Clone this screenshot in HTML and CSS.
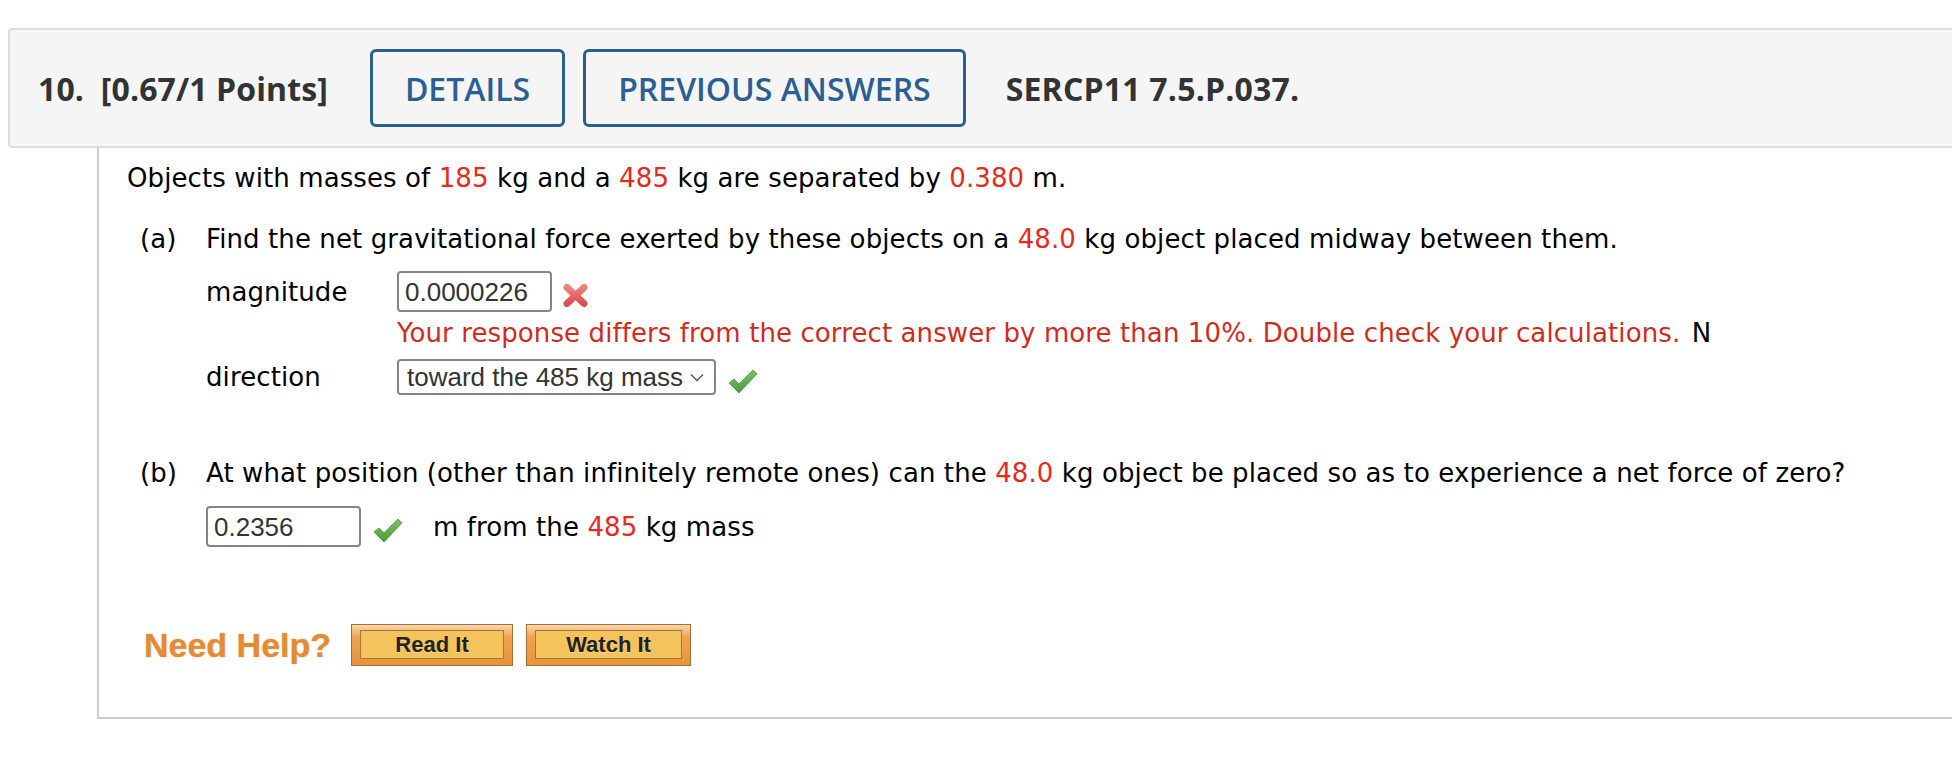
FILE: index.html
```html
<!DOCTYPE html>
<html lang="en">
<head>
<meta charset="utf-8">
<title>Question 10</title>
<link rel="stylesheet" href="styles.css">
</head>
<body>
<div class="page">
  <div class="q-header">
    <span class="q-num">10.&nbsp; [0.67/1 Points]</span>
    <button class="tab-btn tab-first">DETAILS</button>
    <button class="tab-btn">PREVIOUS ANSWERS</button>
    <span class="q-code">SERCP11 7.5.P.037.</span>
  </div>
  <div class="q-body">
    <p class="intro">Objects with masses of <span class="num">185</span> kg and a <span class="num">485</span> kg are separated by <span class="num">0.380</span> m.</p>

    <div class="part part-a">
      <span class="part-label">(a)</span>
      <div class="part-main">
        <p class="prompt">Find the net gravitational force exerted by these objects on a <span class="num">48.0</span> kg object placed midway between them.</p>
        <div class="answers">
          <span class="ans-label">magnitude</span>
          <div class="field">
            <span class="input">0.0000226</span>
            <svg class="icon-x" width="27" height="25" viewBox="0 0 27 25" aria-hidden="true">
              <defs>
                <linearGradient id="xg" x1="0" y1="0" x2="0" y2="1">
                  <stop offset="0" stop-color="#ef8081"/>
                  <stop offset="1" stop-color="#dc4c4f"/>
                </linearGradient>
              </defs>
              <path d="M5 4.5 L22 20.5 M22 4.5 L5 20.5" stroke="url(#xg)" stroke-width="7" stroke-linecap="round" fill="none"/>
            </svg>
          </div>
          <div class="error">Your response differs from the correct answer by more than 10%. Double check your calculations. <span class="unit">N</span></div>
          <span class="ans-label dir">direction</span>
          <div class="field dir">
            <div class="select">
              <span>toward the 485 kg mass</span>
              <svg width="14" height="9" viewBox="0 0 14 9" aria-hidden="true"><polyline points="1,1.5 7,7.5 13,1.5" fill="none" stroke="#555" stroke-width="1.5"/></svg>
            </div>
            <svg class="icon-check" width="31" height="26" viewBox="0 0 31 26" aria-hidden="true">
              <defs>
                <linearGradient id="cg1" x1="0" y1="0" x2="0" y2="1">
                  <stop offset="0" stop-color="#7cc468"/>
                  <stop offset="1" stop-color="#4a9a3b"/>
                </linearGradient>
              </defs>
              <path d="M2 15 L7 11 L12 16 L26 2 L30 6 L12 25 Z" fill="url(#cg1)" stroke="#4f9a40" stroke-width="0.8" stroke-linejoin="round"/>
            </svg>
          </div>
        </div>
      </div>
    </div>

    <div class="part part-b">
      <span class="part-label">(b)</span>
      <div class="part-main">
        <p class="prompt">At what position (other than infinitely remote ones) can the <span class="num">48.0</span> kg object be placed so as to experience a net force of zero?</p>
        <div class="b-row">
          <span class="input">0.2356</span>
          <svg class="icon-check" width="31" height="26" viewBox="0 0 31 26" aria-hidden="true">
            <defs>
              <linearGradient id="cg2" x1="0" y1="0" x2="0" y2="1">
                <stop offset="0" stop-color="#7cc468"/>
                <stop offset="1" stop-color="#4a9a3b"/>
              </linearGradient>
            </defs>
            <path d="M2 15 L7 11 L12 16 L26 2 L30 6 L12 25 Z" fill="url(#cg2)" stroke="#4f9a40" stroke-width="0.8" stroke-linejoin="round"/>
          </svg>
          <span class="b-unit">m from the <span class="num">485</span> kg mass</span>
        </div>
      </div>
    </div>

    <div class="help">
      <span class="need-help">Need Help?</span>
      <span class="help-btn read"><span>Read It</span></span>
      <span class="help-btn watch"><span>Watch It</span></span>
    </div>
  </div>
</div>
</body>
</html>
```

FILE: styles.css
```css
html, body {
  margin: 0;
  padding: 0;
  background: #ffffff;
  overflow: hidden;
}

.page {
  padding: 28px 0 0 8px;
}

/* ---------- header bar ---------- */
.q-header {
  display: flex;
  align-items: center;
  height: 116px;
  margin-right: -40px;
  background: #f5f5f5;
  border: 2px solid #dddddd;
  border-radius: 4px 0 0 4px;
  padding-left: 28px;
  font-family: "Open Sans", "DejaVu Sans", sans-serif;
  font-size: 32px;
  color: #333333;
  white-space: nowrap;
}

.q-num {
  font-weight: 700;
  letter-spacing: 0.1px;
}

.tab-btn {
  box-sizing: border-box;
  height: 78px;
  margin-left: 18px;
  padding: 0 32px;
  border: 3px solid #2b5f94;
  border-radius: 6px;
  background: transparent;
  color: #2b5f94;
  font-family: "Open Sans", "DejaVu Sans", sans-serif;
  font-size: 32px;
  font-weight: 600;
}

.tab-first {
  margin-left: 42px;
}

.q-code {
  margin-left: 40px;
  font-weight: 700;
  letter-spacing: 0.2px;
}

/* ---------- question body ---------- */
.q-body {
  margin-left: 89px;
  margin-right: -40px;
  padding: 15px 0 51px 28px;
  border-left: 2px solid #cccccc;
  border-bottom: 2px solid #cccccc;
  font-family: "DejaVu Sans", Verdana, sans-serif;
  font-size: 26px;
  line-height: 30px;
  letter-spacing: 0.1px;
  color: #000000;
  white-space: nowrap;
}

.intro,
.prompt {
  margin: 0;
}

.num {
  color: #e8291d;
}

.part {
  display: grid;
  grid-template-columns: 66px auto;
  margin-left: 13px;
}

.part-a {
  margin-top: 31px;
}

.part-b {
  margin-top: 63px;
}

.answers {
  display: grid;
  grid-template-columns: 191px auto;
  align-items: center;
  margin-top: 17px;
}

.field {
  display: flex;
  align-items: center;
}

.error {
  grid-column: 2;
  margin-top: 6px;
  color: #d12b20;
}

.error .unit {
  color: #000000;
  margin-left: 3px;
}

.dir {
  margin-top: 11px;
}

.input {
  box-sizing: border-box;
  display: flex;
  align-items: center;
  width: 155px;
  height: 41px;
  padding-left: 6px;
  border: 2px solid #858585;
  border-radius: 4px;
  background: #ffffff;
  font-family: "Liberation Sans", Arial, sans-serif;
  font-size: 26px;
  letter-spacing: 0;
  color: #333333;
}

.icon-x {
  margin-left: 10px;
  margin-top: 7px;
}

.select {
  box-sizing: border-box;
  display: flex;
  align-items: center;
  justify-content: space-between;
  width: 319px;
  height: 36px;
  padding: 0 10px 0 8px;
  border: 2px solid #858585;
  border-radius: 4px;
  background: #ffffff;
  font-family: "Liberation Sans", Arial, sans-serif;
  font-size: 26px;
  letter-spacing: 0;
  color: #333333;
}

.select svg {
  margin-top: 1px;
}

.field .icon-check {
  margin-left: 11px;
  margin-top: 7px;
}

.b-row {
  display: flex;
  align-items: center;
  margin-top: 18px;
}

.b-row .icon-check {
  margin-left: 11px;
  margin-top: 6px;
}

.b-unit {
  margin-left: 30px;
}

/* ---------- need help ---------- */
.help {
  display: flex;
  align-items: center;
  margin-top: 77px;
  margin-left: 17px;
  letter-spacing: 0;
}

.need-help {
  margin-right: 20px;
  font-family: "Liberation Sans", Arial, sans-serif;
  font-size: 34px;
  font-weight: 700;
  line-height: 42px;
  color: #e38b36;
  text-shadow: 0 0 1.5px rgba(227, 139, 54, 0.7);
}

.help-btn {
  box-sizing: border-box;
  display: block;
  height: 42px;
  padding: 5px 8px 6px;
  margin-right: 13px;
  border: 1px solid #a56f33;
  background: linear-gradient(#fad8ad 0%, #eda453 30%, #e8933c 100%);
}

.help-btn.read {
  width: 162px;
}

.help-btn.watch {
  width: 165px;
}

.help-btn span {
  box-sizing: border-box;
  display: flex;
  align-items: center;
  justify-content: center;
  height: 100%;
  border: 1px solid #a57638;
  background: #f4c35e;
  font-family: "Liberation Sans", Arial, sans-serif;
  font-size: 22px;
  font-weight: 700;
  color: #222222;
  text-shadow: 0 1px 0 rgba(255, 230, 170, 0.6);
}
```
